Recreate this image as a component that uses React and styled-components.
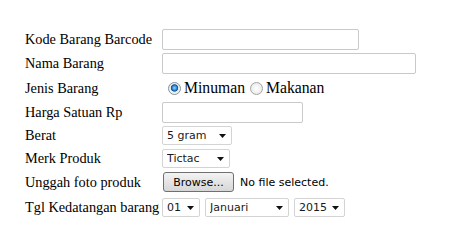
import React from 'react';
import styled, { createGlobalStyle } from 'styled-components';

const GlobalStyle = createGlobalStyle`
  html, body {
    margin: 0;
    padding: 0;
    background: #ffffff;
  }
`;

const Form = styled.form`
  display: flex;
  flex-direction: column;
  padding: 28px 0 0 25px;
  font-family: "Liberation Serif", "Times New Roman", serif;
  font-size: 14.3px;
  color: #000;
`;

const Row = styled.div`
  display: flex;
  align-items: center;
  height: ${p => p.h}px;
`;

const Label = styled.label`
  width: 137px;
  flex: none;
  white-space: nowrap;
`;

const Controls = styled.div`
  display: flex;
  align-items: center;
  gap: ${p => p.gap || 0}px;
`;

const TextInput = styled.input`
  box-sizing: border-box;
  width: ${p => p.w}px;
  height: 21px;
  margin: 0;
  border: 1px solid #c9c9c9;
  border-radius: 2px;
  background: #fff;
  outline: none;
`;

const Radio = styled.input`
  appearance: none;
  box-sizing: border-box;
  width: 13px;
  height: 13px;
  margin: 0 3px 0 ${p => p.ml}px;
  border: 1px solid #a4a4a4;
  border-radius: 50%;
  background: radial-gradient(circle at 50% 50%, #ffffff 0%, #e4e4e4 100%);
  &:checked {
    border-color: #84909a;
    background: radial-gradient(circle at 50% 45%, #9bd8f8 0, #2f8ddb 26%, #174f8f 40%, #e7ecf0 50%, #ffffff 100%);
  }
`;

const RadioText = styled.span`
  font-size: 15.7px;
`;

const SelectWrap = styled.div`
  position: relative;
  width: ${p => p.w}px;
  height: 19px;
`;

const Select = styled.select`
  appearance: none;
  box-sizing: border-box;
  width: 100%;
  height: 100%;
  margin: 0;
  padding: 0 0 0 4px;
  border: 1px solid #d4d4d4;
  border-radius: 2px;
  background: #fff;
  font-family: "DejaVu Sans", Tahoma, sans-serif;
  font-size: 11px;
  color: #1a1a1a;
  outline: none;
`;

const Arrow = styled.svg`
  position: absolute;
  right: 6px;
  top: 8px;
  pointer-events: none;
`;

const BrowseButton = styled.button`
  box-sizing: border-box;
  width: 71px;
  height: 20px;
  margin: 0 0 0 1px;
  padding: 0;
  border: 1px solid #707070;
  border-radius: 3px;
  background: linear-gradient(#f4f4f4, #e4e4e4 50%, #d7d7d7);
  font-family: "DejaVu Sans", Tahoma, sans-serif;
  font-size: 11px;
  color: #000;
`;

const FileNote = styled.span`
  margin-left: 6px;
  font-family: "DejaVu Sans", Tahoma, sans-serif;
  font-size: 11px;
  color: #000;
`;

const Dropdown = ({ w, options }) => (
  <SelectWrap w={w}>
    <Select defaultValue={options[0]}>
      {options.map(o => <option key={o}>{o}</option>)}
    </Select>
    <Arrow width="7" height="4" viewBox="0 0 7 4">
      <path d="M0 0h7L3.5 4z" fill="#111" />
    </Arrow>
  </SelectWrap>
);

export default function App() {
  return (
    <>
      <GlobalStyle />
      <Form onSubmit={e => e.preventDefault()}>
        <Row h={23}>
          <Label>Kode Barang Barcode</Label>
          <TextInput w={197} />
        </Row>
        <Row h={24}>
          <Label>Nama Barang</Label>
          <TextInput w={254} />
        </Row>
        <Row h={26}>
          <Label>Jenis Barang</Label>
          <Controls>
            <Radio type="radio" name="jenis" ml={6} defaultChecked />
            <RadioText>Minuman</RadioText>
            <Radio type="radio" name="jenis" ml={5} />
            <RadioText>Makanan</RadioText>
          </Controls>
        </Row>
        <Row h={22}>
          <Label>Harga Satuan Rp</Label>
          <TextInput w={141} />
        </Row>
        <Row h={24}>
          <Label>Berat</Label>
          <Dropdown w={70} options={['5 gram', '10 gram', '20 gram']} />
        </Row>
        <Row h={22}>
          <Label>Merk Produk</Label>
          <Dropdown w={68} options={['Tictac', 'Mentos', 'Kopiko']} />
        </Row>
        <Row h={26}>
          <Label>Unggah foto produk</Label>
          <Controls>
            <BrowseButton type="button">Browse...</BrowseButton>
            <FileNote>No file selected.</FileNote>
          </Controls>
        </Row>
        <Row h={25}>
          <Label>Tgl Kedatangan barang</Label>
          <Controls gap={5}>
            <Dropdown w={38} options={['01', '02', '03']} />
            <Dropdown w={84} options={['Januari', 'Februari', 'Maret']} />
            <Dropdown w={51} options={['2015', '2016', '2017']} />
          </Controls>
        </Row>
      </Form>
    </>
  );
}
